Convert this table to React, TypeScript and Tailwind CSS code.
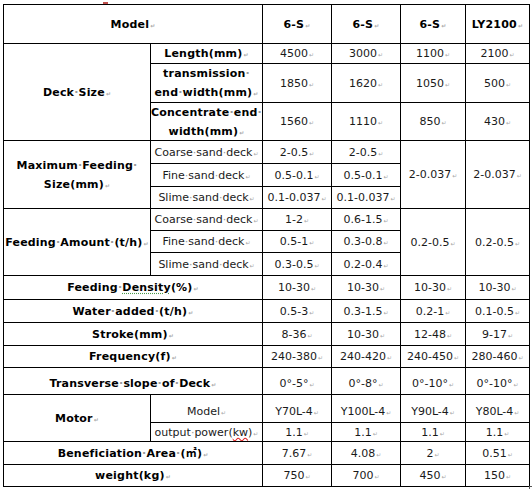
import React from "react";

const Mark = () => (
  <span className="inline-block text-[6px] leading-none text-[#a8a8a8] align-baseline ml-[1px]">↵</span>
);

const Dot = () => <span className="text-[#9a9a9a]">·</span>;

function Words({ t, trailDot }: { t: string; trailDot?: boolean }) {
  const parts = t.split(" ");
  return (
    <>
      {parts.map((p, i) => (
        <React.Fragment key={i}>
          {i > 0 && <Dot />}
          {p}
        </React.Fragment>
      ))}
      {trailDot && <Dot />}
    </>
  );
}

type CellProps = {
  lines: (string | React.ReactNode)[];
  bold?: boolean;
  cls?: string;
};

function Cell({ lines, bold, cls = "" }: CellProps) {
  return (
    <div
      className={`flex flex-col items-center justify-center text-center border-r border-b border-black leading-[19px] whitespace-nowrap overflow-hidden ${
        bold ? "font-bold text-black tracking-[0.2px]" : "text-[#1a1a1a]"
      } ${cls}`}
    >
      {lines.map((l, i) => (
        <div key={i}>
          {typeof l === "string" ? (
            <Words t={l} trailDot={i < lines.length - 1} />
          ) : (
            l
          )}
          {i === lines.length - 1 && <Mark />}
        </div>
      ))}
    </div>
  );
}

const V = ({ v, cls = "" }: { v: string; cls?: string }) => <Cell lines={[v]} cls={cls} />;

export default function App() {
  return (
    <div className="relative w-[532px] h-[489px] bg-white overflow-hidden font-['DejaVu_Sans','Noto_Sans_CJK_SC',sans-serif] text-[11px]">
      <div className="absolute left-[103px] top-[2px] w-[5px] h-[2px] bg-[#c0504d]" />
      <div className="pt-[4px] pl-[3px]">
        <div className="grid w-fit border-l border-t border-black grid-cols-[147px_112px_69px_69px_65px_64px] grid-rows-[39px_20px_39px_38px_23px_23px_22px_22px_22px_23px_24px_23px_23px_22px_27px_28px_19px_23px_22px]">
          {/* Row 1 */}
          <Cell lines={["Model"]} bold cls="col-span-2" />
          <Cell lines={["6-S"]} bold />
          <Cell lines={["6-S"]} bold />
          <Cell lines={["6-S"]} bold />
          <Cell lines={["LY2100"]} bold />

          {/* Deck Size */}
          <Cell lines={["Deck Size"]} bold cls="row-span-3" />
          <Cell lines={["Length(mm)"]} bold />
          <V v="4500" />
          <V v="3000" />
          <V v="1100" />
          <V v="2100" />
          <Cell lines={["transmission", "end width(mm)"]} bold />
          <V v="1850" />
          <V v="1620" />
          <V v="1050" />
          <V v="500" />
          <Cell lines={["Concentrate end", "width(mm)"]} bold />
          <V v="1560" />
          <V v="1110" />
          <V v="850" />
          <V v="430" />

          {/* Maximum Feeding Size */}
          <Cell lines={["Maximum Feeding", "Size(mm)"]} bold cls="row-span-3" />
          <Cell lines={["Coarse sand deck"]} />
          <V v="2-0.5" />
          <V v="2-0.5" />
          <V v="2-0.037" cls="row-span-3" />
          <V v="2-0.037" cls="row-span-3" />
          <Cell lines={["Fine sand deck"]} />
          <V v="0.5-0.1" />
          <V v="0.5-0.1" />
          <Cell lines={["Slime sand deck"]} />
          <V v="0.1-0.037" />
          <V v="0.1-0.037" />

          {/* Feeding Amount */}
          <Cell lines={["Feeding Amount (t/h)"]} bold cls="row-span-3" />
          <Cell lines={["Coarse sand deck"]} />
          <V v="1-2" />
          <V v="0.6-1.5" />
          <V v="0.2-0.5" cls="row-span-3" />
          <V v="0.2-0.5" cls="row-span-3" />
          <Cell lines={["Fine sand deck"]} />
          <V v="0.5-1" />
          <V v="0.3-0.8" />
          <Cell lines={["Slime sand deck"]} />
          <V v="0.3-0.5" />
          <V v="0.2-0.4" />

          {/* Feeding Density */}
          <Cell
            lines={[
              <>
                Feeding<Dot />
                <span className="underline decoration-dotted decoration-[#4a9a4a] underline-offset-2">Density</span>(%)
              </>,
            ]}
            bold
            cls="col-span-2"
          />
          <V v="10-30" />
          <V v="10-30" />
          <V v="10-30" />
          <V v="10-30" />

          <Cell lines={["Water added (t/h)"]} bold cls="col-span-2" />
          <V v="0.5-3" />
          <V v="0.3-1.5" />
          <V v="0.2-1" />
          <V v="0.1-0.5" />

          <Cell lines={["Stroke(mm)"]} bold cls="col-span-2" />
          <V v="8-36" />
          <V v="10-30" />
          <V v="12-48" />
          <V v="9-17" />

          <Cell lines={["Frequency(f)"]} bold cls="col-span-2" />
          <V v="240-380" />
          <V v="240-420" />
          <V v="240-450" />
          <V v="280-460" />

          <Cell lines={["Transverse slope of Deck"]} bold cls="col-span-2 pt-[5px]" />
          <V v="0°-5°" cls="pt-[5px]" />
          <V v="0°-8°" cls="pt-[5px]" />
          <V v="0°-10°" cls="pt-[5px]" />
          <V v="0°-10°" cls="pt-[5px]" />

          {/* Motor */}
          <Cell lines={["Motor"]} bold cls="row-span-2" />
          <Cell lines={["Model"]} cls="pt-[6px]" />
          <V v="Y70L-4" cls="pt-[6px]" />
          <V v="Y100L-4" cls="pt-[6px]" />
          <V v="Y90L-4" cls="pt-[6px]" />
          <V v="Y80L-4" cls="pt-[6px]" />
          <Cell
            lines={[
              <>
                output<Dot />power(
                <span className="underline decoration-wavy decoration-[#e02020] underline-offset-1">kw</span>)
              </>,
            ]}
          />
          <V v="1.1" />
          <V v="1.1" />
          <V v="1.1" />
          <V v="1.1" />

          <Cell lines={["Beneficiation Area (㎡)"]} bold cls="col-span-2" />
          <V v="7.67" />
          <V v="4.08" />
          <V v="2" />
          <V v="0.51" />

          <Cell lines={["weight(kg)"]} bold cls="col-span-2" />
          <V v="750" />
          <V v="700" />
          <V v="450" />
          <V v="150" />
        </div>
      </div>
      <div className="absolute left-[529px] top-[486px] w-[3px] h-[1px] bg-[#555]" />
      <div className="absolute left-[529px] top-[486px] w-[1px] h-[3px] bg-[#555]" />
    </div>
  );
}
